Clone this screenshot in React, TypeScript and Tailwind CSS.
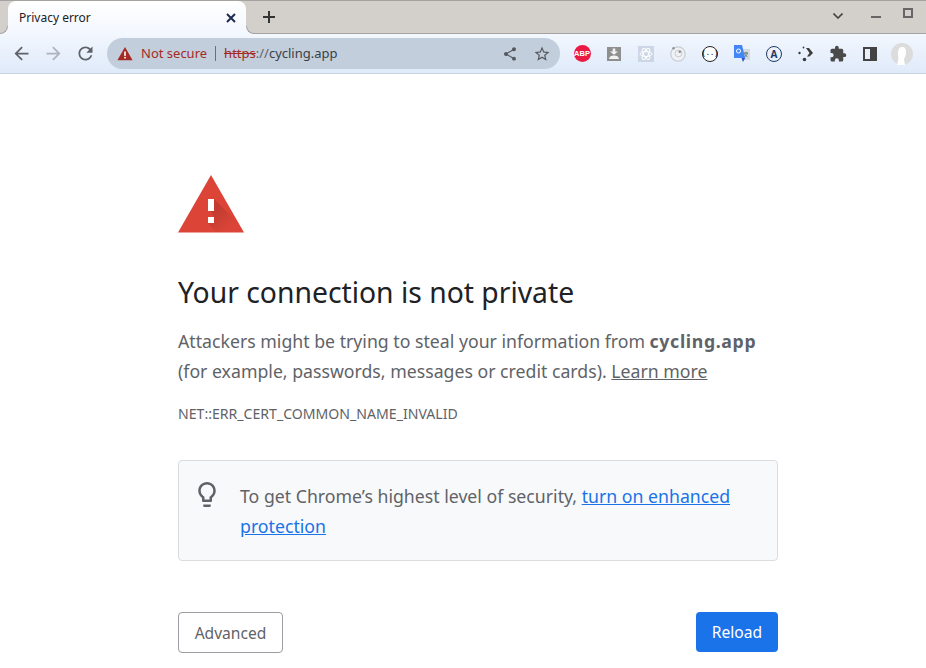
const Warn = ({ className }: { className: string }) => (
  <svg viewBox="0 0 20 18" className={className}>
    <path d="M10 1 19.5 17.5H.5Z" fill="#a52a24" />
    <rect x="9" y="6.5" width="2" height="5.5" fill="#fff" />
    <rect x="9" y="13.2" width="2" height="2" fill="#fff" />
  </svg>
);

const Icon = ({ d, className }: { d: string; className: string }) => (
  <svg viewBox="0 0 24 24" className={className} fill="currentColor">
    <path d={d} />
  </svg>
);

const backPath = 'M20 11H7.83l5.59-5.59L12 4l-8 8 8 8 1.41-1.41L7.83 13H20v-2z';
const forwardPath = 'M4 11h12.17l-5.59-5.59L12 4l8 8-8 8-1.41-1.41L16.17 13H4v-2z';
const reloadPath = 'M17.65 6.35C16.2 4.9 14.21 4 12 4c-4.42 0-7.99 3.58-7.99 8s3.57 8 7.99 8c3.73 0 6.84-2.55 7.73-6h-2.08c-.82 2.33-3.04 4-5.65 4-3.31 0-6-2.69-6-6s2.69-6 6-6c1.66 0 3.14.69 4.22 1.78L13 11h7V4l-2.35 2.35z';
const sharePath = 'M18 16.08c-.76 0-1.44.3-1.96.77L8.91 12.7c.05-.23.09-.46.09-.7s-.04-.47-.09-.7l7.05-4.11c.54.5 1.25.81 2.04.81 1.66 0 3-1.34 3-3s-1.34-3-3-3-3 1.34-3 3c0 .24.04.47.09.7L8.04 9.81C7.5 9.31 6.79 9 6 9c-1.66 0-3 1.34-3 3s1.34 3 3 3c.79 0 1.5-.31 2.04-.81l7.12 4.16c-.05.21-.08.43-.08.65 0 1.61 1.31 2.92 2.92 2.92s2.92-1.31 2.92-2.92-1.31-2.92-2.92-2.92z';
const starPath = 'M22 9.24l-7.19-.62L12 2 9.19 8.63 2 9.24l5.46 4.73L5.82 21 12 17.27 18.18 21l-1.63-7.03L22 9.24zM12 15.4l-3.76 2.27 1-4.28-3.32-2.88 4.38-.38L12 6.1l1.71 4.04 4.38.38-3.32 2.88 1 4.28L12 15.4z';
const bulbPath = 'M9 21c0 .55.45 1 1 1h4c.55 0 1-.45 1-1v-1H9v1zm3-19C8.14 2 5 5.14 5 9c0 2.38 1.19 4.47 3 5.74V17c0 .55.45 1 1 1h6c.55 0 1-.45 1-1v-2.26c1.81-1.27 3-3.36 3-5.74 0-3.86-3.14-7-7-7zm2.85 11.1l-.85.6V16h-4v-2.3l-.85-.6C7.8 12.16 7 10.63 7 9c0-2.76 2.24-5 5-5s5 2.24 5 5c0 1.63-.8 3.16-2.15 4.1z';

const Extensions = () => (
  <div className="flex items-center ml-[6px]">
    <div className="w-8 flex justify-center">
      <div className="w-[17px] h-[17px] rounded-full bg-[#ea1a44] text-white text-[7.5px] font-bold flex items-center justify-center font-['Liberation_Sans',sans-serif]">ABP</div>
    </div>
    <div className="w-8 flex justify-center">
      <svg viewBox="0 0 14 14" className="w-[14px] h-[14px]">
        <rect width="14" height="14" fill="#8f8f8f" />
        <path d="M5.7 1.5h2.6v3H11L7 7.8 3 4.5h2.7ZM2 12c.3-2.6 2.2-3.6 5-3.6s4.7 1 5 3.6Z" fill="#f2f2f2" />
      </svg>
    </div>
    <div className="w-8 flex justify-center">
      <svg viewBox="0 0 16 16" className="w-4 h-4">
        <rect width="16" height="16" fill="#ccd6e6" />
        <g fill="none" stroke="#fff" strokeWidth="1">
          <ellipse cx="8" cy="8" rx="6" ry="2.5" />
          <ellipse cx="8" cy="8" rx="6" ry="2.5" transform="rotate(60 8 8)" />
          <ellipse cx="8" cy="8" rx="6" ry="2.5" transform="rotate(120 8 8)" />
        </g>
      </svg>
    </div>
    <div className="w-8 flex justify-center">
      <svg viewBox="0 0 16 16" className="w-4 h-4">
        <circle cx="8" cy="8" r="7.2" fill="#eef1f5" stroke="#c8ccd0" strokeWidth="1.2" />
        <circle cx="8.5" cy="7.5" r="3.4" fill="none" stroke="#c8ccd0" />
        <circle cx="9.8" cy="5.8" r="1.3" fill="#8e8e8e" />
        <circle cx="3.5" cy="2.2" r="1.2" fill="#8e8e8e" />
      </svg>
    </div>
    <div className="w-8 flex justify-center">
      <div className="w-4 h-4 rounded-full border border-[#222] bg-white flex items-center justify-center text-[7px] font-bold text-[#222] leading-none font-['Liberation_Mono',monospace]">{'(..)'}</div>
    </div>
    <div className="w-8 flex justify-center">
      <svg viewBox="0 0 16 17" className="w-4 h-[17px]">
        <path d="M7 4h9v11H10Z" fill="#d5dae0" />
        <path d="M10 8h4M12 7v1M10.5 8c.5 2 2 3.5 3 4M13.5 8c-.5 2-2 3.5-3 4" stroke="#4d6b5c" strokeWidth=".8" fill="none" />
        <path d="M0 0h8l3.2 13H0Z" fill="#4285f4" />
        <path d="M9 17 7.5 13h3.7Z" fill="#2a56c6" />
        <circle cx="4.5" cy="6" r="2" fill="none" stroke="#fff" strokeWidth="1" />
      </svg>
    </div>
    <div className="w-8 flex justify-center">
      <div className="w-4 h-4 rounded-full border border-[#1f3a63] flex items-center justify-center text-[10px] font-bold text-[#1f3a63] leading-none">A</div>
    </div>
    <div className="w-8 flex justify-center">
      <svg viewBox="0 0 16 16" className="w-4 h-4 text-[#3d3d3d]" fill="currentColor">
        <path d="M8 2h3l4 5-3.5 3.5H9l2.5-3.5Z" />
        <circle cx="5.5" cy="1.5" r=".9" />
        <circle cx="1.5" cy="7" r="1.2" />
        <circle cx="6.5" cy="13.5" r="1.8" />
      </svg>
    </div>
    <div className="w-8 flex justify-center">
      <svg viewBox="0 0 24 24" className="w-[18px] h-[18px]" fill="#4a4a4a">
        <path d="M20.5 11H19V7a2 2 0 0 0-2-2h-4V3.5a2.5 2.5 0 0 0-5 0V5H4a2 2 0 0 0-2 2v3.8h1.5a2.7 2.7 0 0 1 0 5.4H2V20a2 2 0 0 0 2 2h3.8v-1.5a2.7 2.7 0 0 1 5.4 0V22H17a2 2 0 0 0 2-2v-4h1.5a2.5 2.5 0 0 0 0-5Z" />
      </svg>
    </div>
    <div className="w-8 flex justify-center">
      <div className="w-[14px] h-[14px] border-2 border-[#444] flex justify-end">
        <div className="w-[5px] h-full bg-[#444]" />
      </div>
    </div>
    <div className="w-8 flex justify-center">
      <svg viewBox="0 0 22 22" className="w-[22px] h-[22px]">
        <circle cx="11" cy="11" r="11" fill="#dcdcdc" />
        <path d="M11 4c3 0 4 2 4 5s-1 5-2 7l1 6H6l1-4c1-2 0-3 0-8 0-4 2-6 4-6Z" fill="#fff" />
      </svg>
    </div>
  </div>
);

export default function App() {
  return (
    <div className="w-[926px] h-[668px] overflow-hidden bg-white font-['Noto_Sans',sans-serif] text-[#5f6368]">
      <div className="h-[34px] bg-[#d3cfcb] border-t border-b border-[#a5a3a2] flex">
        <div className="relative ml-2 w-[238px] h-[33px] bg-gradient-to-b from-white to-[#f3f7fe] rounded-t-lg flex items-center pl-[11px] pr-[7px] text-[12px] text-[#202124] z-10">
          <div className="absolute bottom-0 -left-2 w-2 h-2 bg-[#f3f7fe]">
            <div className="w-full h-full bg-[#d3cfcb] rounded-br-lg border-r border-b border-[#a5a3a2]" />
          </div>
          <div className="absolute bottom-0 -right-2 w-2 h-2 bg-[#f3f7fe]">
            <div className="w-full h-full bg-[#d3cfcb] rounded-bl-lg border-l border-b border-[#a5a3a2]" />
          </div>
          <span>Privacy error</span>
          <svg viewBox="0 0 10 10" className="w-[10px] h-[10px] ml-auto mr-[3px] text-[#1f2a50]" stroke="currentColor" strokeWidth="2">
            <path d="M1 1 9 9M9 1 1 9" />
          </svg>
        </div>
        <div className="h-full flex items-center ml-[17px]">
          <svg viewBox="0 0 12 12" className="w-3 h-3 text-[#333]" stroke="currentColor" strokeWidth="2">
            <path d="M6 0v12M0 6h12" />
          </svg>
        </div>
        <div className="ml-auto h-full relative w-[110px]">
          <svg viewBox="0 0 10 6" className="absolute left-[17px] top-[12px] w-[10px] h-[6px] text-[#444]" fill="none" stroke="currentColor" strokeWidth="1.6">
            <path d="M.5.5 5 5 9.500.5" />
          </svg>
          <div className="absolute left-[55px] top-[15px] w-[10px] h-[2px] bg-[#666]" />
          <div className="absolute left-[87px] top-[7px] w-[10px] h-[10px] border-2 border-[#666]" />
        </div>
      </div>
      <div className="h-[40px] bg-gradient-to-b from-[#f3f7fe] to-[#dfeafa] border-b border-[#c9d3e2] flex items-center pl-[5px]">
        <div className="w-8 flex justify-center">
          <Icon d={backPath} className="w-[21px] h-[21px] text-[#5f6368]" />
        </div>
        <div className="w-8 flex justify-center">
          <Icon d={forwardPath} className="w-[21px] h-[21px] text-[#aeb4bd]" />
        </div>
        <div className="w-8 flex justify-center">
          <Icon d={reloadPath} className="w-[21px] h-[21px] text-[#5f6368]" />
        </div>
        <div className="ml-[6px] w-[453px] h-[31px] rounded-full bg-[#c2cedb] flex items-center pl-[10px] pr-[10px] text-[13px]">
          <Warn className="w-4 h-[15px] shrink-0" />
          <span className="ml-[8px] text-[#a52a24]">Not secure</span>
          <span className="w-px h-[15px] bg-[#6b7078] mx-[8px]" />
          <span className="text-[#a52a24] line-through">https</span>
          <span className="text-[#5f6368]">://</span>
          <span className="text-[#3b3f45]">cycling.app</span>
          <Icon d={sharePath} className="w-4 h-4 ml-auto text-[#55595f]" />
          <Icon d={starPath} className="w-[18px] h-[18px] ml-[15px] -mr-px text-[#55595f]" />
        </div>
        <Extensions />
      </div>
      <div className="pl-[178px] pt-[101px] w-[778px]">
        <svg viewBox="0 0 66 58" className="w-[66px] h-[58px] block">
          <defs>
            <linearGradient id="shade" gradientUnits="userSpaceOnUse" x1="38" y1="34" x2="54" y2="50">
              <stop offset="0" stopColor="#000" stopOpacity="0.12" />
              <stop offset="1" stopColor="#000" stopOpacity="0" />
            </linearGradient>
          </defs>
          <path d="M33 0 66 57.500H0Z" fill="#db4437" />
          <path d="M36 24 62 50 66 57.500H39L30 48H36V42L33 36H36Z" fill="url(#shade)" />
          <rect x="30" y="24" width="6" height="12" fill="#fff" />
          <rect x="30" y="42" width="6" height="6" fill="#fff" />
        </svg>
        <h1 className="mt-[39px] text-[28.3px] leading-[40px] text-[#202124] font-normal">Your connection is not private</h1>
        <p className="mt-[14px] text-[17.7px] leading-[30px]">
          Attackers might be trying to steal your information from <strong className="font-bold tracking-[0.65px]">cycling.app</strong>
          <br />
          (for example, passwords, messages or credit cards). <span className="underline">Learn more</span>
        </p>
        <p className="mt-[18px] text-[14.1px] leading-[20px]">NET::ERR_CERT_COMMON_NAME_INVALID</p>
        <div className="mt-[36px] h-[101px] border border-[#dadce0] rounded bg-[#f8f9fa] flex pl-[19px] pr-[30px] pt-[21px]">
          <svg viewBox="5 2 14 20" className="w-[18px] h-[25px] shrink-0 text-[#5f6368]" fill="currentColor">
            <path d={bulbPath} />
          </svg>
          <p className="ml-[24px] -mt-[1px] text-[17.7px] leading-[30px]">
            To get Chrome’s highest level of security, <span className="text-[#1a73e8] underline">turn on enhanced</span>
            <br />
            <span className="text-[#1a73e8] underline">protection</span>
          </p>
        </div>
        <div className="mt-[51px] flex justify-between">
          <div className="w-[105px] h-[41px] pt-[2px] rounded border border-[#9a9da1] flex items-center justify-center text-[15.6px]">Advanced</div>
          <div className="w-[82px] h-[40px] pt-[2px] rounded bg-[#1a73e8] text-white flex items-center justify-center text-[15.6px]">Reload</div>
        </div>
      </div>
    </div>
  );
}
